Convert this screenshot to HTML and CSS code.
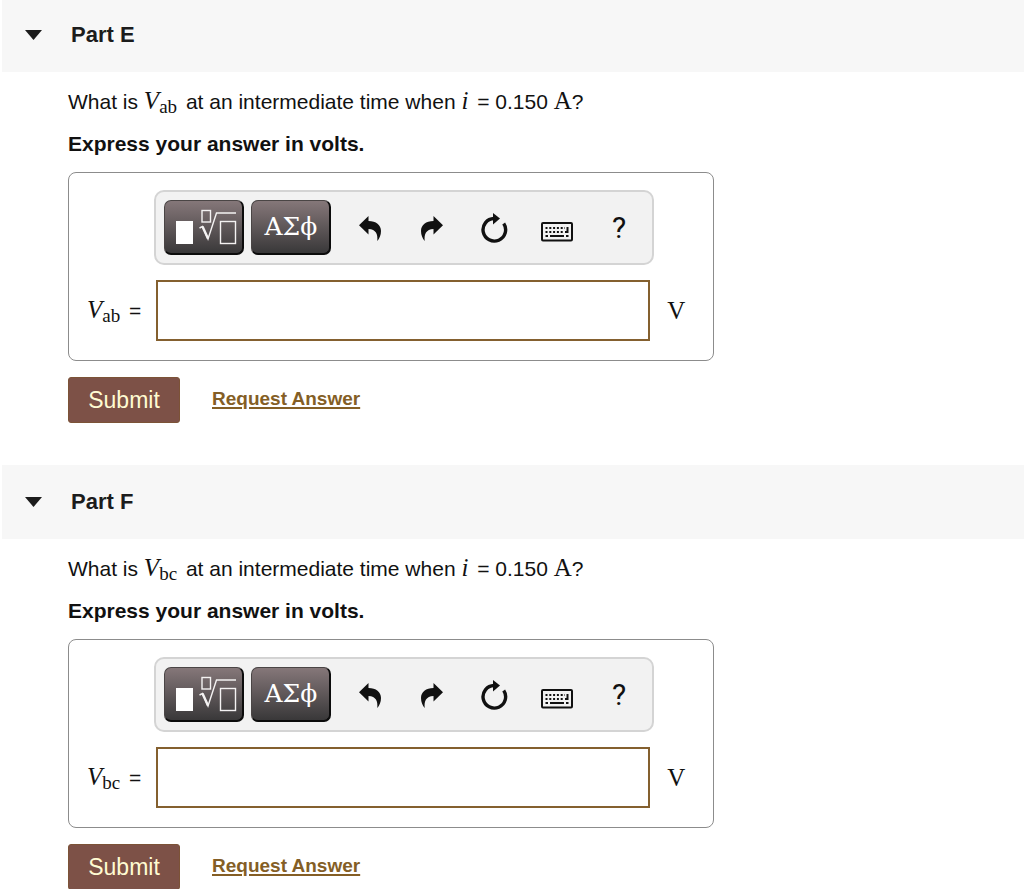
FILE: index.html
```html
<!DOCTYPE html>
<html lang="en">
<head>
<meta charset="utf-8">
<meta name="viewport" content="width=device-width, initial-scale=1">
<title>Part E and Part F</title>
<link rel="stylesheet" href="styles.css">
</head>
<body>
<svg class="defs" aria-hidden="true">
  <symbol id="i-template" viewBox="0 0 80 54">
    <rect x="12" y="21" width="17" height="23" fill="#fff"/>
    <g fill="none" stroke="#f4f2f2" stroke-width="1.4">
      <rect x="38" y="10.500" width="8.500" height="11.500"/>
      <rect x="56.500" y="21.500" width="15" height="22"/>
      <path d="M35.500 28L38.500 26.500L44 39L52.500 13H72"/>
      <path d="M38.500 26.500L44 38.500" stroke-width="2.400"/>
    </g>
  </symbol>
  <symbol id="i-undo" viewBox="0 0 22 26">
    <path d="M0 10.300L9.500 1V6C17 6 22 10 22 16C22 20 20.500 23.500 18.300 26C19 19 17 14.500 9.500 14V19.500Z"/>
  </symbol>
  <symbol id="i-reset" viewBox="0 0 28 30">
    <path d="M14 5.500A11.300 11.300 0 1 0 23.700 10.500" fill="none" stroke="currentColor" stroke-width="3.400"/>
    <path d="M13 0L20 5.500L13 11.500Z"/>
  </symbol>
  <symbol id="i-keyboard" viewBox="0 0 32 20">
    <rect x="1" y="1" width="30" height="17.500" rx="1" fill="none" stroke="currentColor" stroke-width="2"/>
    <path d="M4.500 6H24M4.500 10H23" fill="none" stroke="currentColor" stroke-width="2" stroke-dasharray="2 1.800"/>
    <path d="M4.500 14H7M9 14H23M25 14H27.500M24 10H27M26.500 5V11" fill="none" stroke="currentColor" stroke-width="2"/>
  </symbol>
</svg>

<main>
  <section class="part">
    <header class="part-header">
      <button class="toggle" type="button" aria-label="Collapse Part E"></button>
      <h2>Part E</h2>
    </header>
    <div class="part-body">
      <p class="question">What is <span class="math var"><i>V</i><sub>ab</sub></span> at an intermediate time when <span class="math var"><i>i</i></span> = 0.150 <span class="math">A</span>?</p>
      <p class="instruction">Express your answer in volts.</p>
      <form>
        <div class="answer">
          <div class="toolbar" role="toolbar" aria-label="Equation tools">
            <button class="key" type="button" aria-label="Templates"><svg class="template"><use href="#i-template"/></svg></button>
            <button class="key" type="button">ΑΣϕ</button>
            <div class="tools">
              <button class="tool" type="button" aria-label="Undo"><svg class="arrow"><use href="#i-undo"/></svg></button>
              <button class="tool" type="button" aria-label="Redo"><svg class="arrow redo"><use href="#i-undo"/></svg></button>
              <button class="tool" type="button" aria-label="Reset"><svg class="reset"><use href="#i-reset"/></svg></button>
              <button class="tool" type="button" aria-label="Keyboard shortcuts"><svg class="keyboard"><use href="#i-keyboard"/></svg></button>
              <button class="tool" type="button">?</button>
            </div>
          </div>
          <label for="v-ab"><span class="math var"><i>V</i><sub>ab</sub></span> =</label>
          <input id="v-ab" type="text">
          <span class="math unit">V</span>
        </div>
        <div class="actions">
          <button class="submit" type="submit">Submit</button>
          <a class="request" href="#">Request Answer</a>
        </div>
      </form>
    </div>
  </section>

  <section class="part">
    <header class="part-header">
      <button class="toggle" type="button" aria-label="Collapse Part F"></button>
      <h2>Part F</h2>
    </header>
    <div class="part-body">
      <p class="question">What is <span class="math var"><i>V</i><sub>bc</sub></span> at an intermediate time when <span class="math var"><i>i</i></span> = 0.150 <span class="math">A</span>?</p>
      <p class="instruction">Express your answer in volts.</p>
      <form>
        <div class="answer">
          <div class="toolbar" role="toolbar" aria-label="Equation tools">
            <button class="key" type="button" aria-label="Templates"><svg class="template"><use href="#i-template"/></svg></button>
            <button class="key" type="button">ΑΣϕ</button>
            <div class="tools">
              <button class="tool" type="button" aria-label="Undo"><svg class="arrow"><use href="#i-undo"/></svg></button>
              <button class="tool" type="button" aria-label="Redo"><svg class="arrow redo"><use href="#i-undo"/></svg></button>
              <button class="tool" type="button" aria-label="Reset"><svg class="reset"><use href="#i-reset"/></svg></button>
              <button class="tool" type="button" aria-label="Keyboard shortcuts"><svg class="keyboard"><use href="#i-keyboard"/></svg></button>
              <button class="tool" type="button">?</button>
            </div>
          </div>
          <label for="v-bc"><span class="math var"><i>V</i><sub>bc</sub></span> =</label>
          <input id="v-bc" type="text">
          <span class="math unit">V</span>
        </div>
        <div class="actions">
          <button class="submit" type="submit">Submit</button>
          <a class="request" href="#">Request Answer</a>
        </div>
      </form>
    </div>
  </section>
</main>
</body>
</html>
```

FILE: styles.css
```css
* {
  box-sizing: border-box;
}

body {
  margin: 0;
  background: #fff;
  color: #111;
  font: 21px/28px "Liberation Sans", Arial, sans-serif;
}

button {
  margin: 0;
  padding: 0;
  border: 0;
  background: none;
  color: inherit;
  font: inherit;
}

svg {
  display: block;
  fill: currentColor;
}

.defs {
  display: none;
}

main {
  padding-left: 2px;
}

.part-header {
  display: flex;
  align-items: center;
  gap: 29px;
  padding: 23px;
  background: #f7f7f7;
}

.part:first-child .part-header {
  padding-top: 21px;
}

.toggle {
  width: 17px;
  height: 10px;
  background: #1c1c1c;
  clip-path: polygon(0 0, 100% 0, 50% 100%);
}

h2 {
  margin: 0;
  font-size: 22px;
  line-height: 28px;
  color: #1c1c1c;
}

.part-body {
  padding: 16px 16px 42px 66px;
}

.part:last-child .part-body {
  padding-bottom: 0;
}

p {
  margin: 0;
}

.question {
  margin-bottom: 14px;
}

.instruction {
  margin-bottom: 14px;
  font-weight: bold;
}

.math {
  font-family: "Liberation Serif", "Times New Roman", serif;
  font-size: 25px;
  line-height: 24px;
}

.math sub {
  font-size: 19px;
  line-height: 0;
  vertical-align: -4px;
}

.var {
  margin-right: 3px;
}

.answer {
  display: grid;
  grid-template-columns: auto minmax(0, 500px) auto;
  column-gap: 13px;
  row-gap: 15px;
  align-items: center;
  width: fit-content;
  max-width: 100%;
  padding: 17px 28px 19px 18px;
  border: 1px solid #8c8c8c;
  border-radius: 8px;
}

.answer label {
  grid-column: 1;
  white-space: nowrap;
}

.toolbar {
  grid-column: 2;
  display: flex;
  align-items: center;
  gap: 7px;
  padding: 8px 2px 8px 8px;
  border: 2px solid #d4d4d4;
  border-radius: 10px;
  background: #f2f2f2;
}

.key {
  display: grid;
  place-items: center;
  width: 80px;
  height: 55px;
  border: 1px solid #3b3838;
  border-width: 1px 2px 2px 1px;
  border-color: #4a4545 #0c0c0c #0c0c0c #4a4545;
  border-radius: 7px;
  background: linear-gradient(#857779, #393839);
  color: #fff;
  font: 25px/30px "DejaVu Serif", serif;
}

.template {
  width: 80px;
  height: 54px;
  margin: -2px;
}

.tools {
  flex: 1;
  display: flex;
}

.tool {
  flex: 1;
  display: grid;
  place-items: center;
  height: 54px;
  font: 30px/32px "Roboto", sans-serif;
}

.arrow {
  width: 22px;
  height: 26px;
}

.redo {
  transform: scaleX(-1);
}

.reset {
  width: 28px;
  height: 30px;
}

.keyboard {
  width: 32px;
  height: 20px;
  margin-top: 8px;
}

input {
  width: calc(100% - 6px);
  height: 61px;
  margin-left: 2px;
  padding: 0 12px;
  border: 2px solid #84602f;
  background: #fff;
  font: inherit;
}

.actions {
  display: flex;
  align-items: center;
  gap: 32px;
  margin-top: 16px;
}

.submit {
  width: 112px;
  height: 46px;
  border: 1px solid #7c5337;
  border-radius: 3px;
  background: #7d5147;
  color: #fffbd2;
  font-size: 23px;
}

.request {
  padding-bottom: 2px;
  color: #845e25;
  font-size: 19px;
  font-weight: bold;
  text-underline-offset: 2px;
  text-decoration-thickness: 2px;
}
```
